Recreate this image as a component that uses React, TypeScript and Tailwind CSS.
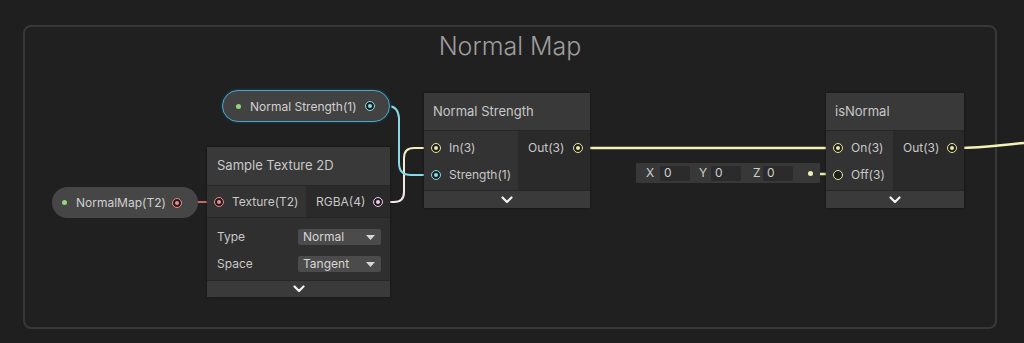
import React from "react";

type PortProps = { color: string; filled?: boolean };

// small socket circle used by every node port
function Port({ color, filled = true }: PortProps) {
  return (
    <span
      className="flex h-[10px] w-[10px] shrink-0 items-center justify-center rounded-full border-[1.5px] bg-[#1e1e1e]"
      style={{ borderColor: color }}
    >
      {filled && <span className="h-[4px] w-[4px] rounded-full" style={{ backgroundColor: color }} />}
    </span>
  );
}

function Chevron() {
  return (
    <svg width="12" height="8" viewBox="0 0 12 8" fill="none">
      <path d="M1.5 1.5 L6 6 L10.5 1.5" stroke="#f2f2f2" strokeWidth="2.2" strokeLinecap="round" strokeLinejoin="round" />
    </svg>
  );
}

function InPort({ label, color, filled = true }: { label: string; color: string; filled?: boolean }) {
  return (
    <div className="flex h-[27px] items-center gap-[8px] pl-[7px]">
      <Port color={color} filled={filled} />
      <span>{label}</span>
    </div>
  );
}

function OutPort({ label, color }: { label: string; color: string }) {
  return (
    <div className="flex h-[27px] items-center justify-between pl-[10px] pr-[7px]">
      <span>{label}</span>
      <Port color={color} />
    </div>
  );
}

function Dropdown({ value }: { value: string }) {
  return (
    <div className="flex h-[16px] w-[83px] items-center justify-between rounded-[2px] bg-[#4b4b4b] pl-[5px] pr-[6px] text-[12px] text-[#d6d6d6]">
      <span>{value}</span>
      <svg width="9" height="5" viewBox="0 0 9 5">
        <path d="M0 0 H9 L4.5 5 Z" fill="#d6d6d6" />
      </svg>
    </div>
  );
}

const YELLOW = "#e8e8a6";
const CYAN = "#86dbe6";
const RED = "#f08a8a";
const PINK = "#f3c9ee";

export default function App() {
  return (
    <div
      className="relative h-[343px] w-[1024px] overflow-hidden bg-[#1f1f1f] text-[12px] text-[#c8c8c8]"
      style={{ fontFamily: "Inter, 'Noto Sans', sans-serif" }}
    >
      {/* group frame */}
      <div className="absolute left-[23px] top-[25px] h-[304px] w-[974px] rounded-[8px] border-2 border-[#383838] bg-[#202020]">
        <div className="pt-[3px] text-center text-[25px] font-light leading-[32px] text-[#9d9d9d]">Normal Map</div>
      </div>

      {/* edges */}
      <svg className="absolute left-0 top-0" width="1024" height="343">
        <defs>
          <linearGradient id="rgbaEdge" x1="386" y1="202" x2="428" y2="148" gradientUnits="userSpaceOnUse">
            <stop offset="0" stopColor="#f6e4f2" />
            <stop offset="1" stopColor="#f4f0b8" />
          </linearGradient>
        </defs>
        <line x1="186" y1="202" x2="192" y2="202" stroke="#c66b6b" strokeWidth="2" />
        <line x1="195" y1="202" x2="214" y2="202" stroke="#c66b6b" strokeWidth="2" />
        <path d="M381 202 H394 Q404 202 404 192 V158 Q404 148 414 148 H431" stroke="url(#rgbaEdge)" strokeWidth="2" fill="none" />
        <path d="M374 106 H388 Q398 106 399 118 V163 Q399 175 411 175 H431" stroke={CYAN} strokeWidth="2" fill="none" />
        <line x1="583" y1="148" x2="833" y2="148" stroke="#f2f2b6" strokeWidth="2.5" />
        <line x1="812" y1="174" x2="833" y2="174" stroke={YELLOW} strokeWidth="2.5" />
        <path d="M957 148 C985 148 1000 145 1024 143" stroke="#f2f2b6" strokeWidth="2.5" fill="none" />
      </svg>

      {/* property: Normal Strength */}
      <div className="absolute left-[222px] top-[90px] flex h-[32px] w-[168px] items-center rounded-full border-[1.5px] border-[#4fa8c6] bg-[#424242] pl-[13px] pr-[14px] shadow-[0_0_0_1.5px_#16303a]">
        <span className="h-[5px] w-[5px] rounded-full bg-[#93d47c]" />
        <span className="ml-[9px] flex-1 pt-[1px] text-[#d0d0d0]">Normal Strength(1)</span>
        <Port color={CYAN} />
      </div>

      {/* property: NormalMap */}
      <div className="absolute left-[52px] top-[187px] flex h-[31px] w-[146px] items-center rounded-full bg-[#464646] pl-[10px] pr-[16px]">
        <span className="h-[5px] w-[5px] rounded-full bg-[#93d47c]" />
        <span className="ml-[9px] flex-1 text-[#d0d0d0]">NormalMap(T2)</span>
        <Port color={RED} />
      </div>

      {/* Sample Texture 2D */}
      <div className="absolute left-[207px] top-[147px] flex w-[183px] flex-col bg-[#2f2f2f] shadow-[0_0_2px_#111]">
        <div className="flex h-[39px] items-center border-b border-[#262626] bg-[#393939] pl-[10px] text-[13px] text-[#c8c8c8]">
          Sample Texture 2D
        </div>
        <div className="flex h-[32px] border-b border-[#262626]">
          <div className="flex w-[99px] items-center bg-[#333333]">
            <InPort label="Texture(T2)" color={RED} />
          </div>
          <div className="flex flex-1 items-center bg-[#2a2a2a]">
            <div className="flex-1">
              <OutPort label="RGBA(4)" color={PINK} />
            </div>
          </div>
        </div>
        <div className="flex h-[62px] flex-col gap-[9px] bg-[#2f2f2f] pl-[10px] pt-[10px]">
          <div className="flex items-center justify-between pr-[9px]">
            <span>Type</span>
            <Dropdown value="Normal" />
          </div>
          <div className="flex items-center justify-between pr-[9px]">
            <span>Space</span>
            <Dropdown value="Tangent" />
          </div>
        </div>
        <div className="flex h-[17px] items-center justify-center border-t border-[#262626] bg-[#3a3a3a]">
          <Chevron />
        </div>
      </div>

      {/* Normal Strength */}
      <div className="absolute left-[424px] top-[93px] flex w-[166px] flex-col bg-[#2f2f2f] shadow-[0_0_2px_#111]">
        <div className="flex h-[38px] items-center border-b border-[#262626] bg-[#393939] pl-[9px] text-[13px] text-[#c8c8c8]">
          Normal Strength
        </div>
        <div className="flex h-[59px]">
          <div className="flex w-[94px] flex-col bg-[#333333] pt-[3px]">
            <InPort label="In(3)" color={YELLOW} />
            <InPort label="Strength(1)" color={CYAN} />
          </div>
          <div className="flex-1 bg-[#2a2a2a] pt-[3px]">
            <OutPort label="Out(3)" color={YELLOW} />
          </div>
        </div>
        <div className="flex h-[18px] items-center justify-center border-t border-[#262626] bg-[#3a3a3a]">
          <Chevron />
        </div>
      </div>

      {/* inline Vector3 default */}
      <div className="absolute left-[636px] top-[163px] flex h-[20px] w-[184px] items-center bg-[#383838] pl-[10px] pr-[7px] text-[#cfcfcf]">
        <span className="w-[14px]">X</span>
        <span className="flex h-[15px] w-[30px] items-center rounded-[2px] bg-[#2b2b2b] pl-[4px]">0</span>
        <span className="ml-[9px] w-[12px]">Y</span>
        <span className="flex h-[15px] w-[30px] items-center rounded-[2px] bg-[#2b2b2b] pl-[4px]">0</span>
        <span className="ml-[12px] w-[10px]">Z</span>
        <span className="flex h-[15px] w-[30px] items-center rounded-[2px] bg-[#2b2b2b] pl-[4px]">0</span>
        <span className="ml-auto h-[5px] w-[5px] rounded-full bg-[#f0f0b8]" />
      </div>

      {/* isNormal */}
      <div className="absolute left-[826px] top-[93px] flex w-[138px] flex-col bg-[#2f2f2f] shadow-[0_0_2px_#111]">
        <div className="flex h-[38px] items-center border-b border-[#262626] bg-[#393939] pl-[9px] text-[13px] text-[#c8c8c8]">
          isNormal
        </div>
        <div className="flex h-[59px]">
          <div className="flex w-[67px] flex-col bg-[#333333] pt-[3px]">
            <InPort label="On(3)" color={YELLOW} />
            <InPort label="Off(3)" color={YELLOW} filled={false} />
          </div>
          <div className="flex-1 bg-[#2a2a2a] pt-[3px]">
            <OutPort label="Out(3)" color={YELLOW} />
          </div>
        </div>
        <div className="flex h-[18px] items-center justify-center border-t border-[#262626] bg-[#3a3a3a]">
          <Chevron />
        </div>
      </div>
    </div>
  );
}
